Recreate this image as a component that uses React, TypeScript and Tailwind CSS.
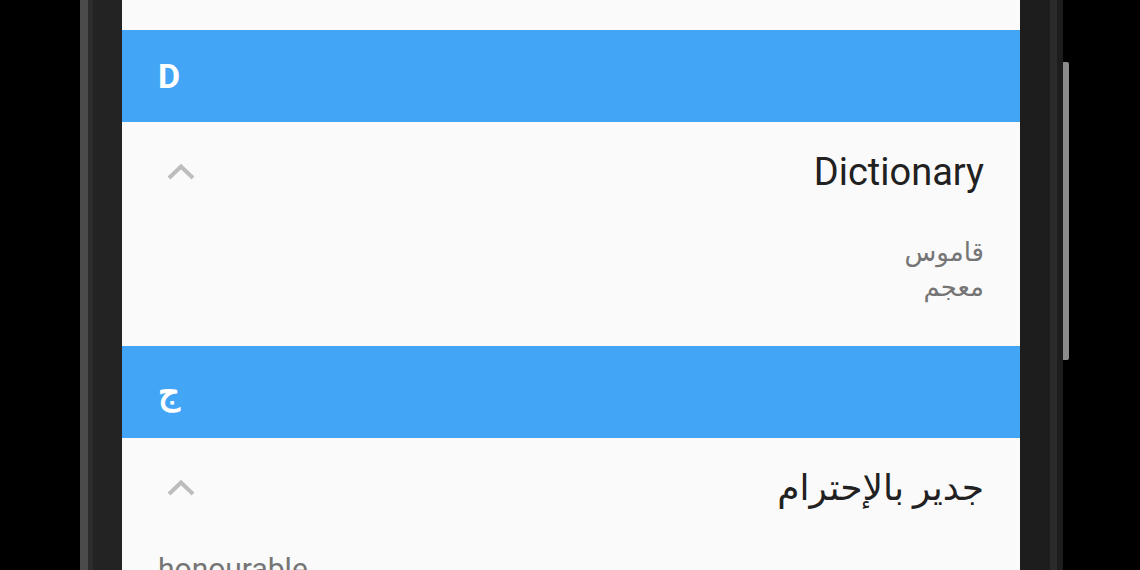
import { ReactNode } from "react";

const ARABIC = "font-['Roboto','Noto_Sans','DejaVu_Sans',sans-serif]";

function Chevron() {
  return (
    <svg width="30" height="18" viewBox="0 0 30 18" className="shrink-0 ml-[8px]">
      <path d="M3 15 L15 3.5 L27 15" fill="none" stroke="#bdbdbd" strokeWidth="4" />
    </svg>
  );
}

function SectionHeader({ label }: { label: string }) {
  return (
    <div className="h-[92px] bg-[#42a5f5] flex items-center px-9">
      <span className="text-white text-[34px] font-bold leading-none">{label}</span>
    </div>
  );
}

interface EntryProps {
  title: string;
  titleArabic?: boolean;
  children: ReactNode;
  rtl?: boolean;
}

function Entry({ title, titleArabic, children, rtl }: EntryProps) {
  return (
    <div className="bg-[#fafafa] px-9 pt-[22px] pb-[41px]">
      <div className="h-[56px] flex items-center justify-between">
        <Chevron />
        <span
          dir={titleArabic ? "rtl" : "ltr"}
          className={`text-[#212121] leading-none ${titleArabic ? "text-[36px] " + ARABIC : "text-[38px]"}`}
        >
          {title}
        </span>
      </div>
      <div
        dir={rtl ? "rtl" : "ltr"}
        className={`mt-[35px] text-[#757575] leading-[35px] ${rtl ? "text-[26px] " + ARABIC : "text-[30px]"}`}
      >
        {children}
      </div>
    </div>
  );
}

export default function App() {
  return (
    <div className="w-[1140px] h-[570px] bg-black flex overflow-hidden font-['Roboto',sans-serif]">
      {/* left bezel */}
      <div className="w-[80px] shrink-0" />
      <div className="w-[8px] shrink-0 bg-[#4b4b4b]" />
      <div className="w-[5px] shrink-0 bg-[#2c2c2c]" />
      <div className="w-[29px] shrink-0 bg-[#232323]" />

      {/* screen */}
      <div className="w-[898px] shrink-0 bg-[#fafafa] overflow-hidden">
        <div className="h-[30px] bg-[#fafafa]" />
        <SectionHeader label="D" />
        <Entry title="Dictionary" rtl>
          <div>قاموس</div>
          <div>معجم</div>
        </Entry>
        <SectionHeader label="ج" />
        <Entry title="جدير بالإحترام" titleArabic>
          <div>honourable</div>
        </Entry>
      </div>

      {/* right bezel */}
      <div className="w-[30px] shrink-0 bg-[#1d1d1d]" />
      <div className="w-[7px] shrink-0 bg-[#2b2b2b]" />
      <div className="w-[6px] shrink-0 bg-[#1d1d1d]" />
      <div className="w-[6px] shrink-0">
        <div className="mt-[62px] h-[298px] bg-[#8c8c8c] rounded-r-[2px]" />
      </div>
    </div>
  );
}
